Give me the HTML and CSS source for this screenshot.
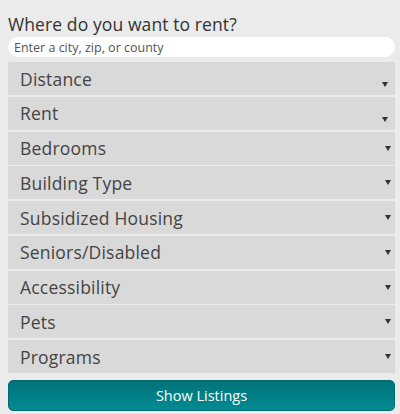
FILE: index.html
```html
<!DOCTYPE html>
<html lang="en">
<head>
  <meta charset="UTF-8" />
  <meta name="viewport" content="width=device-width, initial-scale=1.0" />
  <title>Rental Search</title>
  <link rel="stylesheet" href="styles.css">
</head>
<body>
  <div class="search-panel">
    <h2 class="search-title">Where do you want to rent?</h2>
    <input type="text" class="location-input" placeholder="Enter a city, zip, or county" />

    <!-- Filter dropdowns -->
    <div class="filter-list">
      <div class="filter-row low-arrow"><span>Distance</span><span class="arrow"></span></div>
      <div class="filter-row low-arrow"><span>Rent</span><span class="arrow"></span></div>
      <div class="filter-row"><span>Bedrooms</span><span class="arrow"></span></div>
      <div class="filter-row"><span>Building Type</span><span class="arrow"></span></div>
      <div class="filter-row"><span>Subsidized Housing</span><span class="arrow"></span></div>
      <div class="filter-row"><span>Seniors/Disabled</span><span class="arrow"></span></div>
      <div class="filter-row"><span>Accessibility</span><span class="arrow"></span></div>
      <div class="filter-row"><span>Pets</span><span class="arrow"></span></div>
      <div class="filter-row"><span>Programs</span><span class="arrow"></span></div>
    </div>

    <button class="show-btn">Show Listings</button>
  </div>
</body>
</html>
```

FILE: styles.css
```css
body {
  margin: 0;
  padding: 0;
  background: #ebebeb;
  font-family: "Open Sans", Arial, sans-serif;
}

.search-panel {
  width: 387px;
  padding: 11px 0 0 8px;
}

.search-title {
  margin: 0;
  font-size: 17.5px;
  letter-spacing: 0.1px;
  font-weight: normal;
  color: #333;
  line-height: 26px;
}

.location-input {
  display: block;
  box-sizing: border-box;
  width: 387px;
  height: 20px;
  margin: 0 0 5px 0;
  padding: 0 6px;
  border: none;
  border-radius: 10px;
  background: white;
  font-family: inherit;
  font-size: 12.5px;
}

.location-input::placeholder {
  color: #555;
}

.filter-list {
  display: flex;
  flex-direction: column;
  gap: 1.75px;
}

.filter-row {
  position: relative;
  display: flex;
  align-items: center;
  height: 33px;
  padding: 0 12px;
  background: #d9d9d9;
  color: #444;
  font-size: 17.5px;
  letter-spacing: 0.2px;
}

.arrow {
  position: absolute;
  right: 4px;
  top: 14px;
  width: 0;
  height: 0;
  border-left: 3.5px solid transparent;
  border-right: 3.5px solid transparent;
  border-top: 5px solid #333;
}

.low-arrow .arrow {
  right: 7px;
  top: 20px;
}

.show-btn {
  display: block;
  width: 387px;
  height: 31px;
  margin-top: 7px;
  border: 1px solid #006a70;
  border-radius: 5px;
  background: linear-gradient(#00737a, #008b91);
  color: white;
  font-family: inherit;
  font-size: 14.5px;
  cursor: pointer;
}
```
